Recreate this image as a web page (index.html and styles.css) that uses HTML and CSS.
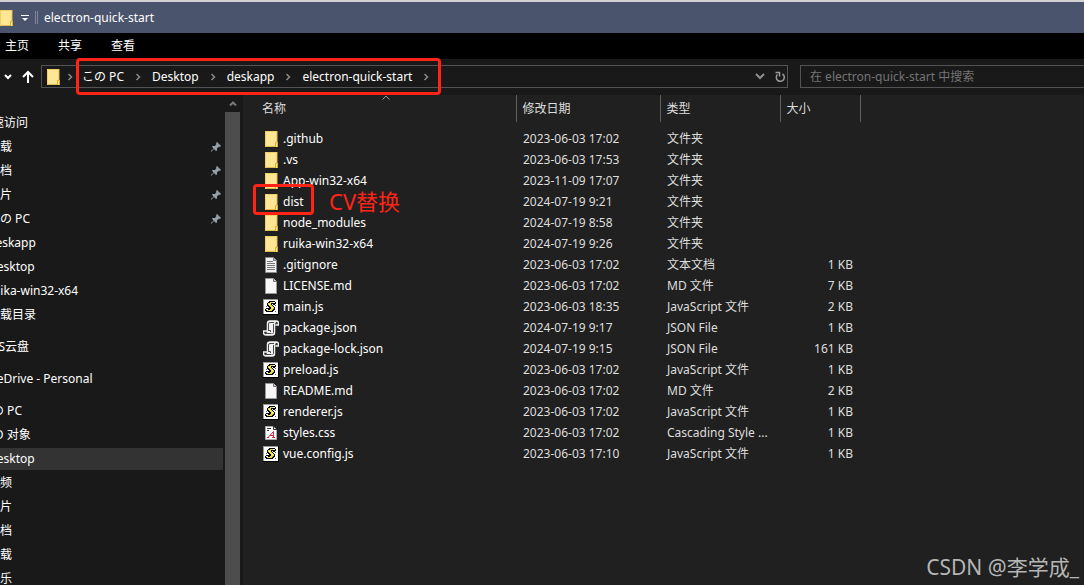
FILE: index.html
```
<!DOCTYPE html>
<html lang="zh-CN">
	<head>
		<meta charset="utf-8">
		<title>electron-quick-start</title>
		<link rel="stylesheet" href="styles.css">
	</head>
	<body>
    <svg class="sprite" aria-hidden="true">
      <symbol id="folder" viewBox="-1 0 16 16">
        <path d="M1 0h12v11h1v5H1z" fill="#ffe695"/>
        <path d="M1 0h12v11M1 15.5h12.500" fill="none" stroke="#e3bb4a"/>
        <path d="M1.500 0v16M1 .5h12" fill="none" stroke="#f3d064"/>
        <path d="M11.500 16v-4.500h2V16" fill="#ffe695" stroke="#dcae2d"/>
      </symbol>
      <symbol id="text" viewBox="0 0 16 16">
        <path d="M2.500 .5h8l3 3v12h-11z" fill="#f2f2f2" stroke="#8a8a8a"/>
        <path d="M10.500 .5v3h3" fill="#bbb" stroke="#777"/>
        <path d="M4 4.500h6M4 6.500h8M4 8.500h8M4 10.500h8M4 12.500h8" stroke="#777" fill="none"/>
      </symbol>
      <symbol id="blank" viewBox="0 0 16 16">
        <path d="M2.500 .5h8l3 3v12h-11z" fill="#f7f7f7" stroke="#999"/>
        <path d="M10.500 .5v3h3" fill="#ccc" stroke="#777"/>
      </symbol>
      <symbol id="js" viewBox="0 0 16 16">
        <path d="M0 0h16v16H0z" fill="#000"/>
        <path d="M0 0h15v15H0z" fill="#999"/>
        <path d="M1 1h14v14H1z" fill="#fff"/>
        <path d="M6 2h6v1h1v2h-1v1h-2V5H9v1h1v1h1v1h1v3h-1v1h-1v1H3v-1H2v-2h1V9h3V8H5V7H4V4h1V3h1z" fill="#000"/>
        <path d="M7 3h3v1H7zM5 4h3v2H5zM6 6h3v1H6zM7 7h3v1H7zM8 8h3v2H8zM7 10h3v1H7zM4 11h5v1H4z" fill="#e6dc32"/>
        <path d="M10 3h2v1h-2zM6 5h1v1H6zM9 8h1v1H9zM3 10h2v1H3zM6 11h1v1H6z" fill="#fff"/>
        <path d="M12 6h1v1h-1zM3 7h1v1H3zM12 12h1v1h-1z" fill="#555"/>
      </symbol>
      <symbol id="json" viewBox="0 0 16 16">
        <path d="M4 11V3.500Q4 1 6.500 1H14q-2 .5-2 3v8.500q0 2.500-2.500 2.500H3z" fill="#f2f2f2"/>
        <path d="M4.500 11V3.500Q4.500 1 7 1h6.500Q15.500 1 15.500 3.500V5h-3M13.500 1q-2 0-2 3v8.500Q11.500 15 9 15H3Q.5 15 .5 12.500V11H8v1.500Q8 15 9.500 15" fill="none" stroke="#f2f2f2" stroke-width="1.500"/>
        <path d="M5.500 11V4q0-1.500 1.500-1.500h4M2 12.500q0 1 1 1h5.500M10.500 4v8.500q0 1-1 1M7.500 12V10.500h-2M13 4q0-1.500 1-1.500" fill="none" stroke="#4a4a4a"/>
      </symbol>
      <symbol id="css" viewBox="0 0 16 16">
        <path d="M2.500 1.500h8l3 3v10h-11z" fill="#fff" stroke="#aaa"/>
        <path d="M4 3h4v1H4zM4 5h2v1H4z" fill="#333"/>
        <path d="M10.500 1v3.500H14" fill="none" stroke="#333"/>
        <path d="M4 12.500h2M5 12.500L10.500 6.500v6M7 10.500h4M9 12.500h3" fill="none" stroke="#cf2740"/>
      </symbol>
      <symbol id="pin" viewBox="0 0 10 10">
        <path d="M6 0L10 4 9 5 8 4.500 6 6.500 6 8.500 5 9 3 7 0 10 0 9 2.500 6.500 1 4.500 1.500 4 4 4 5.500 2 5 1z" fill="#94a0a8"/>
      </symbol>
      <symbol id="chev" viewBox="0 0 6 8">
        <path d="M1.500 1L4.500 4l-3 3" fill="none" stroke="#8a8a8a" stroke-width="1.500"/>
      </symbol>
    </svg>

    <div class="window">
      <header class="titlebar">
        <svg class="icon"><use href="#folder"/></svg>
        <svg class="quick" viewBox="0 0 8 8"><path d="M0 1.500h8" stroke="#fff"/><path d="M1 4h6L4 7z" fill="#fff"/></svg>
        <span class="split"></span>
        <h1>electron-quick-start</h1>
      </header>

      <nav class="ribbon">
        <a href="#">主页</a>
        <a href="#">共享</a>
        <a href="#">查看</a>
      </nav>

      <div class="toolbar">
        <button class="recent" aria-label="最近"><svg viewBox="0 0 8 6"><path d="M1 1l3 3 3-3" fill="none" stroke="#fff" stroke-width="2"/></svg></button>
        <button class="up" aria-label="上移"><svg viewBox="0 0 12 14"><path d="M6 13V2M1 7l5-5 5 5" fill="none" stroke="#fff" stroke-width="2"/></svg></button>
        <div class="address">
          <svg class="icon"><use href="#folder"/></svg>
          <svg class="chev"><use href="#chev"/></svg>
          <div class="crumbs">
            <a href="#">この PC</a>
            <svg class="chev"><use href="#chev"/></svg>
            <a href="#">Desktop</a>
            <svg class="chev"><use href="#chev"/></svg>
            <a href="#">deskapp</a>
            <svg class="chev"><use href="#chev"/></svg>
            <a href="#">electron-quick-start</a>
            <svg class="chev"><use href="#chev"/></svg>
            <span class="mark"></span>
          </div>
          <button class="drop" aria-label="展开"><svg viewBox="0 0 10 7"><path d="M1 1l4 4 4-4" fill="none" stroke="#8f8f8f" stroke-width="2"/></svg></button>
          <button class="reload" aria-label="刷新"><svg viewBox="0 0 12 12"><path d="M8.500 3a4 4 0 1 1-5 .5M1.500 1.500h4v4" fill="none" stroke="#9a9a9a" stroke-width="1.500"/></svg></button>
        </div>
        <input class="search" type="search" aria-label="搜索" placeholder="在 electron-quick-start 中搜索">
      </div>

      <div class="content">
        <aside class="sidebar">
          <ul class="tree">
            <li><a href="#">快速访问</a>
              <ul>
                <li><a href="#">下载</a><svg class="pin"><use href="#pin"/></svg></li>
                <li><a href="#">文档</a><svg class="pin"><use href="#pin"/></svg></li>
                <li><a href="#">图片</a><svg class="pin"><use href="#pin"/></svg></li>
                <li><a href="#">この PC</a><svg class="pin"><use href="#pin"/></svg></li>
                <li><a href="#">deskapp</a></li>
                <li><a href="#">Desktop</a></li>
                <li><a href="#">ruika-win32-x64</a></li>
                <li><a href="#">下载目录</a></li>
              </ul>
            </li>
            <li><a href="#">WPS云盘</a></li>
            <li><a href="#">OneDrive - Personal</a></li>
            <li><a href="#">この PC</a>
              <ul>
                <li><a href="#">3D 对象</a></li>
                <li class="active"><a href="#">Desktop</a></li>
                <li><a href="#">视频</a></li>
                <li><a href="#">图片</a></li>
                <li><a href="#">文档</a></li>
                <li><a href="#">下载</a></li>
                <li><a href="#">音乐</a></li>
              </ul>
            </li>
          </ul>
          <div class="scrollbar">
            <svg viewBox="0 0 8 6"><path d="M1 5l3-3 3 3" fill="none" stroke="#777" stroke-width="2"/></svg>
            <div class="thumb"></div>
          </div>
        </aside>

        <main class="files">
          <table>
            <colgroup>
              <col class="c-name"><col class="c-date"><col class="c-type"><col class="c-size">
            </colgroup>
            <thead>
              <tr>
                <th>名称<svg class="sort" viewBox="0 0 8 5"><path d="M.5 4.500L4 1l3.500 3.500" fill="none" stroke="#999"/></svg></th>
                <th>修改日期</th><th>类型</th><th>大小</th>
              </tr>
            </thead>
            <tbody>
              <tr><td><svg class="icon"><use href="#folder"/></svg>.github</td><td>2023-06-03 17:02</td><td>文件夹</td><td></td></tr>
              <tr><td><svg class="icon"><use href="#folder"/></svg>.vs</td><td>2023-06-03 17:53</td><td>文件夹</td><td></td></tr>
              <tr><td><svg class="icon"><use href="#folder"/></svg>App-win32-x64</td><td>2023-11-09 17:07</td><td>文件夹</td><td></td></tr>
              <tr><td><svg class="icon"><use href="#folder"/></svg>dist<span class="mark"></span><span class="note">CV替换</span></td><td>2024-07-19 9:21</td><td>文件夹</td><td></td></tr>
              <tr><td><svg class="icon"><use href="#folder"/></svg>node_modules</td><td>2024-07-19 8:58</td><td>文件夹</td><td></td></tr>
              <tr><td><svg class="icon"><use href="#folder"/></svg>ruika-win32-x64</td><td>2024-07-19 9:26</td><td>文件夹</td><td></td></tr>
              <tr><td><svg class="icon"><use href="#text"/></svg>.gitignore</td><td>2023-06-03 17:02</td><td>文本文档</td><td>1 KB</td></tr>
              <tr><td><svg class="icon"><use href="#blank"/></svg>LICENSE.md</td><td>2023-06-03 17:02</td><td>MD 文件</td><td>7 KB</td></tr>
              <tr><td><svg class="icon"><use href="#js"/></svg>main.js</td><td>2023-06-03 18:35</td><td>JavaScript 文件</td><td>2 KB</td></tr>
              <tr><td><svg class="icon"><use href="#json"/></svg>package.json</td><td>2024-07-19 9:17</td><td>JSON File</td><td>1 KB</td></tr>
              <tr><td><svg class="icon"><use href="#json"/></svg>package-lock.json</td><td>2024-07-19 9:15</td><td>JSON File</td><td>161 KB</td></tr>
              <tr><td><svg class="icon"><use href="#js"/></svg>preload.js</td><td>2023-06-03 17:02</td><td>JavaScript 文件</td><td>1 KB</td></tr>
              <tr><td><svg class="icon"><use href="#blank"/></svg>README.md</td><td>2023-06-03 17:02</td><td>MD 文件</td><td>2 KB</td></tr>
              <tr><td><svg class="icon"><use href="#js"/></svg>renderer.js</td><td>2023-06-03 17:02</td><td>JavaScript 文件</td><td>1 KB</td></tr>
              <tr><td><svg class="icon"><use href="#css"/></svg>styles.css</td><td>2023-06-03 17:02</td><td>Cascading Style ...</td><td>1 KB</td></tr>
              <tr><td><svg class="icon"><use href="#js"/></svg>vue.config.js</td><td>2023-06-03 17:10</td><td>JavaScript 文件</td><td>1 KB</td></tr>
            </tbody>
          </table>
          <div class="watermark">CSDN @李学成_</div>
        </main>
      </div>
    </div>
	</body>
</html>
```
FILE: styles.css
```
* {
  box-sizing: border-box;
}
body {
  margin: 0;
  background-color: #191919;
  color: #fff;
  font: 12px/20px "Noto Sans", "Noto Sans CJK SC", sans-serif;
}
a {
  color: inherit;
  text-decoration: none;
}
ul {
  margin: 0;
  padding: 0;
  list-style: none;
}
button {
  display: flex;
  align-items: center;
  justify-content: center;
  height: 100%;
  padding: 0;
  border: 0;
  background: none;
}
.sprite {
  display: none;
}
.icon {
  flex: none;
  width: 16px;
  height: 16px;
}
.window {
  display: flex;
  flex-direction: column;
  height: 100vh;
  overflow: hidden;
}

/* 标题栏 */
.titlebar {
  display: flex;
  flex: none;
  align-items: center;
  height: 33px;
  border-top: 2px solid #d2d2d2;
  background-color: #4a546c;
}
.titlebar .icon {
  margin-left: -2px;
}
.titlebar h1 {
  margin: 0;
  font-size: 12px;
  font-weight: normal;
}
.quick {
  width: 8px;
  height: 8px;
  margin-left: 7px;
}
.split {
  width: 3px;
  height: 13px;
  margin: 0 6px 0 6px;
  border: 1px solid #7d869b;
  border-width: 0 1px;
}
.ribbon {
  display: flex;
  flex: none;
  align-items: center;
  gap: 29px;
  height: 26px;
  padding-left: 5px;
  background-color: #000;
}

/* 地址栏 */
.toolbar {
  display: flex;
  flex: none;
  height: 36px;
  padding: 6px 0 7px;
}
.recent {
  width: 15px;
}
.recent svg {
  width: 8px;
  height: 6px;
}
.up {
  width: 26px;
}
.up svg {
  width: 12px;
  height: 14px;
}
.address {
  display: flex;
  flex: 745 1 0;
  align-items: center;
  border: 1px solid #535353;
}
.address > .icon {
  margin: 0 6px 0 3px;
}
.chev {
  width: 6px;
  height: 8px;
}
.crumbs {
  display: flex;
  position: relative;
  align-items: center;
  gap: 11px;
  margin-right: auto;
  padding-left: 9px;
}
.mark {
  position: absolute;
  border: 3px solid #ff2416;
  border-radius: 4px;
}
.crumbs .mark {
  top: -9px;
  right: -12px;
  bottom: -8px;
  left: 3px;
}
.drop {
  width: 20px;
}
.drop svg {
  width: 10px;
  height: 7px;
}
.reload {
  width: 15px;
  margin-left: 2px;
}
.reload svg {
  width: 12px;
  height: 12px;
}
.search {
  flex: 265 1 0;
  min-width: 0;
  margin-left: 12px;
  padding: 0 9px;
  border: 1px solid #535353;
  border-right: 0;
  border-radius: 0;
  outline: 0;
  background: none;
  color: #fff;
  font: inherit;
}
.search::placeholder {
  color: #747474;
}

/* 左侧导航 */
.content {
  display: flex;
  flex: 1;
  min-height: 0;
}
.sidebar {
  display: flex;
  flex: none;
  width: 244px;
  border-right: 1px solid #202020;
  overflow: hidden;
}
.tree {
  flex: 1;
  margin-right: 2px;
  padding-top: 16px;
  line-height: 24px;
}
.tree a {
  flex: 1;
  margin-left: -20px;
  white-space: nowrap;
}
.tree > li {
  margin-bottom: 8px;
}
.tree li li {
  display: flex;
  align-items: center;
  height: 24px;
}
.tree li li a {
  margin-left: -12px;
}
.tree .active {
  height: 22px;
  margin: 1px 0;
  background-color: #333;
}
.pin {
  width: 10px;
  height: 10px;
  margin-right: 2px;
}
.scrollbar {
  display: flex;
  flex-direction: column;
  align-items: center;
  width: 15px;
  margin-right: 3px;
}
.scrollbar svg {
  flex: none;
  width: 8px;
  height: 17px;
}
.thumb {
  flex: 1;
  width: 100%;
  background-color: #4d4d4d;
}

/* 文件列表 */
.files {
  flex: 1;
  position: relative;
  background-color: #202020;
}
table {
  width: 616px;
  table-layout: fixed;
  border-collapse: collapse;
}
.c-name {
  width: 272px;
}
.c-date {
  width: 144px;
}
.c-type {
  width: 120px;
}
.c-size {
  width: 80px;
}
th {
  position: relative;
  height: 27px;
  padding: 0 6px;
  border-right: 1px solid #606060;
  color: #dedede;
  font-weight: normal;
  text-align: left;
}
th:first-child {
  padding-left: 18px;
}
.sort {
  position: absolute;
  top: 0;
  left: 51%;
  width: 8px;
  height: 5px;
}
tbody::before {
  display: block;
  height: 6px;
  content: "";
}
td {
  height: 21px;
  padding: 0 7px;
  color: #dedede;
  line-height: 21px;
  white-space: nowrap;
}
td:first-child {
  display: flex;
  position: relative;
  align-items: center;
  gap: 4px;
  padding-left: 19px;
  color: #fff;
}
td:last-child {
  text-align: right;
}
td .mark {
  top: -7px;
  bottom: -3px;
  left: 9px;
  width: 61px;
}
.note {
  position: absolute;
  left: 85px;
  color: #ff2416;
  font-size: 22px;
}
.watermark {
  position: absolute;
  right: 5px;
  bottom: 6px;
  color: #b5b5b5;
  font-size: 21px;
  line-height: 24px;
}
```
